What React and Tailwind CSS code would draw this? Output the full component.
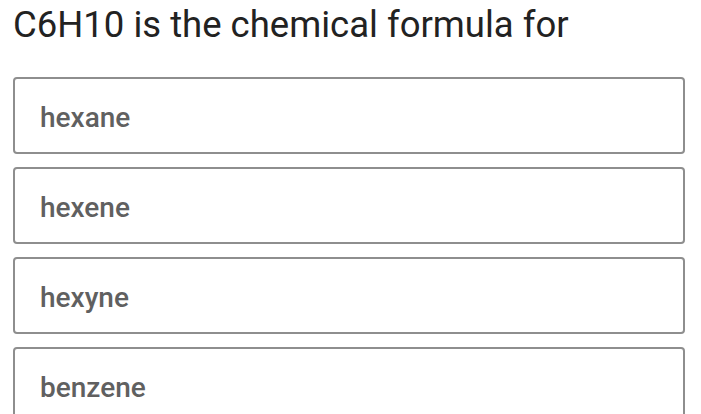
const options = ["hexane", "hexene", "hexyne", "benzene"];

export default function App() {
  return (
    <div className="h-[414px] w-[701px] overflow-hidden bg-white pl-[13px] font-['Roboto',sans-serif]">
      <h1 className="pt-[2px] text-[36.5px] leading-[46px] font-normal text-[#222]">
        C6H10 is the chemical formula for
      </h1>
      <div className="mt-[29px] flex w-[672px] flex-col gap-[13px]">
        {options.map((o) => (
          <div
            key={o}
            className="flex h-[77px] shrink-0 items-center rounded-[4px] border-2 border-[#8e8e8e] pl-[25px] pt-[5px] text-[28px] font-medium text-[#606060]"
          >
            {o}
          </div>
        ))}
      </div>
    </div>
  );
}
